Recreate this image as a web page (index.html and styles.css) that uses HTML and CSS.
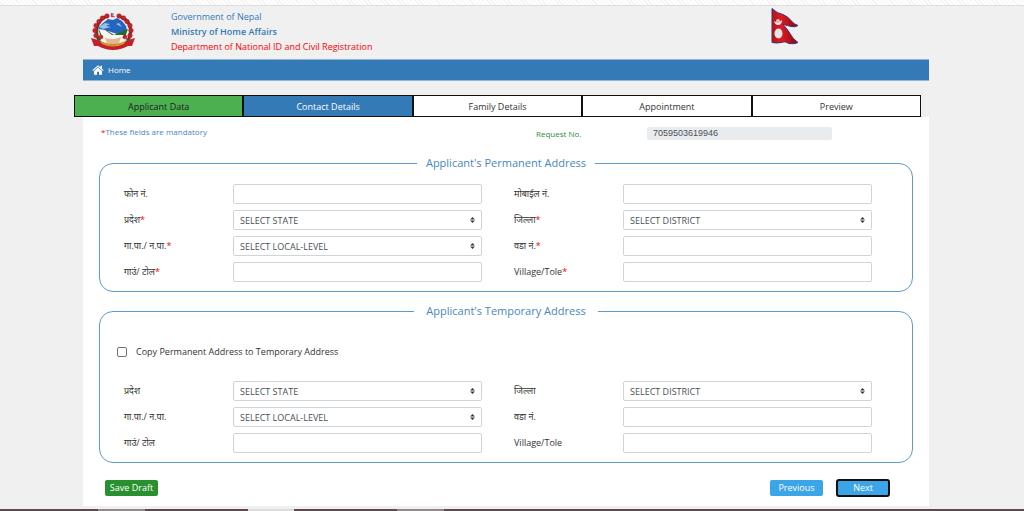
FILE: index.html
```html
<!DOCTYPE html>
<html lang="en">
<head>
<meta charset="utf-8">
<title>Contact Details</title>
<link rel="stylesheet" href="styles.css">
</head>
<body>
<div class="top-strip"></div>
<div class="page">
  <header class="masthead">
    <svg class="emblem" viewBox="0 0 44 38" role="img" aria-label="Emblem of Nepal">
      <circle cx="22" cy="18" r="16" fill="#f3f1ee"/>
      <path d="M17 4Q4 8 6 24q1 3 3 5M27 4q15 4 12 20-1 3-3 5" fill="none" stroke="#31572b" stroke-width="3"/>
      <path d="M8 15l4-4 5-4 5 1 4-2 5 3 4 5 1 4-10 4-9-3-9 0z" fill="#2566bd"/>
      <path d="M8 15l6-4 5 1-4 2 5 1-8 2zM24 8l4 3-3 1 6 3-3-4z" fill="#9fc0e6"/>
      <path d="M8 18l7 0 8 5 9-4 5-2-3 8-8 3-8-3-9-2z" fill="#236b2c"/>
      <path d="M8 17l6 1 7 5 12 0-3 5-10 1-9-5z" fill="#f7f7f5"/>
      <path d="M14 26l6 1 4 0 6-2-2 6-5 2-7-2z" fill="#e6b78f"/>
      <path d="M8 28q6 4 14 4t14-4l-3 6q-11 4-22 0z" fill="#c48a22"/>
      <path d="M0 26l7 2q15 10 30 0l7-2-3 8-4 0q-15 8-30 0l-4 0z" fill="#c4202c"/>
      <path d="M9 29q13 7 26 0l-2 3q-11 5-22 0z" fill="#cf9a2c"/>
      <g fill="#d01c2a" stroke="#8f1620" stroke-width=".4">
        <circle cx="16" cy="4" r="2.300"/><circle cx="11.500" cy="6" r="2.300"/><circle cx="8" cy="9.500" r="2.300"/><circle cx="5" cy="13.500" r="2.300"/><circle cx="4" cy="18.500" r="2.300"/><circle cx="5" cy="23.500" r="2.300"/><circle cx="10" cy="25" r="2"/>
        <circle cx="28" cy="4" r="2.300"/><circle cx="32.500" cy="6" r="2.300"/><circle cx="36" cy="9.500" r="2.300"/><circle cx="39" cy="13.500" r="2.300"/><circle cx="40" cy="18.500" r="2.300"/><circle cx="39" cy="23.500" r="2.300"/><circle cx="34" cy="25" r="2"/>
      </g>
      <path d="M20 1l3 1-2 1 3 2h-4z" fill="#c82b5a" stroke="#8b7bb5" stroke-width=".5"/>
    </svg>
    <div class="titles">
      <span>Government of Nepal</span>
      <strong>Ministry of Home Affairs</strong>
      <span class="department">Department of National ID and Civil Registration</span>
    </div>
    <svg class="flag" viewBox="0 0 28 37" role="img" aria-label="Flag of Nepal">
      <defs>
        <linearGradient id="cloth" x1="0" x2="1" y1="0" y2="0">
          <stop offset="0" stop-color="#b3131c"/><stop offset=".35" stop-color="#dc1b22"/><stop offset=".7" stop-color="#b40f18"/><stop offset="1" stop-color="#6f0a25"/>
        </linearGradient>
      </defs>
      <path d="M1 .5q5 5 11 6 5 2 8 6 3 4 7 5-3 2-7 1-3-1-8-2 4 4 7 9 3 6 8 9-4 2-9 1-4-3-8-1-4 1-9 0z" fill="url(#cloth)" stroke="#41306f" stroke-width="1"/>
      <path d="M3 13q4 3 8-1 0 5-4 5-3 0-4-4z" fill="#ececec"/>
      <circle cx="7" cy="13" r="2" fill="#e3b9b9"/>
      <ellipse cx="7.500" cy="25.500" rx="4" ry="5" fill="#e6e6e6"/>
    </svg>
  </header>

  <nav class="navbar">
    <a class="home" href="#">
      <svg class="home-icon" viewBox="0 0 12 10" aria-hidden="true">
        <path d="M6 .2L.3 5.2l.7.8L6 1.7 11 6l.7-.8L10 3.7V.8H8.400v1.500z" fill="#fff"/>
        <path d="M6 2.500L2 6v3.800h3V6.700h2v3.100h3V6z" fill="#fff"/>
      </svg>
      Home
    </a>
  </nav>

  <div class="tabs">
    <button class="tab done" type="button">Applicant Data</button>
    <button class="tab current" type="button">Contact Details</button>
    <button class="tab" type="button">Family Details</button>
    <button class="tab" type="button">Appointment</button>
    <button class="tab" type="button">Preview</button>
  </div>

  <form class="panel">
    <div class="request">
      <p class="note"><span class="req">*</span>These fields are mandatory</p>
      <label class="request-label" for="request-no">Request No.</label>
      <input class="request-no" id="request-no" type="text" value="7059503619946" readonly>
    </div>

    <fieldset class="group">
      <legend>Applicant's Permanent Address</legend>
      <div class="fields">
        <div class="field"><label for="p-phone">फोन नं.</label><input id="p-phone" type="text"></div>
        <div class="field"><label for="p-mobile">मोबाईल नं.</label><input id="p-mobile" type="text"></div>
        <div class="field"><label for="p-state">प्रदेश<span class="req">*</span></label><select id="p-state"><option>SELECT STATE</option></select></div>
        <div class="field"><label for="p-district">जिल्ला<span class="req">*</span></label><select id="p-district"><option>SELECT DISTRICT</option></select></div>
        <div class="field"><label for="p-local">गा.पा./ न.पा.<span class="req">*</span></label><select id="p-local"><option>SELECT LOCAL-LEVEL</option></select></div>
        <div class="field"><label for="p-ward">वडा नं.<span class="req">*</span></label><input id="p-ward" type="text"></div>
        <div class="field"><label for="p-tole">गाउं/ टोल<span class="req">*</span></label><input id="p-tole" type="text"></div>
        <div class="field"><label for="p-village">Village/Tole<span class="req">*</span></label><input id="p-village" type="text"></div>
      </div>
    </fieldset>

    <fieldset class="group temporary">
      <legend>Applicant's Temporary Address</legend>
      <div class="copy">
        <input id="copy" type="checkbox">
        <label for="copy">Copy Permanent Address to Temporary Address</label>
      </div>
      <div class="fields">
        <div class="field"><label for="t-state">प्रदेश</label><select id="t-state"><option>SELECT STATE</option></select></div>
        <div class="field"><label for="t-district">जिल्ला</label><select id="t-district"><option>SELECT DISTRICT</option></select></div>
        <div class="field"><label for="t-local">गा.पा./ न.पा.</label><select id="t-local"><option>SELECT LOCAL-LEVEL</option></select></div>
        <div class="field"><label for="t-ward">वडा नं.</label><input id="t-ward" type="text"></div>
        <div class="field"><label for="t-tole">गाउं/ टोल</label><input id="t-tole" type="text"></div>
        <div class="field"><label for="t-village">Village/Tole</label><input id="t-village" type="text"></div>
      </div>
    </fieldset>

    <div class="actions">
      <button class="btn save" type="button">Save Draft</button>
      <button class="btn" type="button">Previous</button>
      <button class="btn next" type="button">Next</button>
    </div>
  </form>
</div>
<div class="bottom-strip"></div>
</body>
</html>
```
FILE: styles.css
```css
* {
  box-sizing: border-box;
}

body {
  margin: 0;
  background: #f0f0f0;
  color: #333;
  font: 9px/14px "Open Sans", "Noto Sans", "Noto Sans Devanagari", sans-serif;
}

button,
input,
select {
  margin: 0;
  font: inherit;
  color: inherit;
}

.top-strip {
  height: 6px;
  border-bottom: 1px solid #dedede;
  background: repeating-linear-gradient(45deg, #fff 0 2px, #f3f3f3 2px 3px);
}

.page {
  padding: 0 95px 0 83px;
}

.masthead {
  display: flex;
  align-items: flex-start;
  height: 53px;
  padding: 2px 130px 0 8px;
}

.emblem {
  width: 44px;
  height: 38px;
  margin-top: 4px;
}

.titles {
  display: flex;
  flex-direction: column;
  gap: 1px;
  margin: 2px auto 0 36px;
  color: #337ab7;
}

.titles strong {
  font-weight: 600;
}

.titles .department {
  color: #f00;
}

.flag {
  width: 28px;
  height: 37px;
}

.navbar {
  display: flex;
  height: 22px;
  padding-left: 9px;
  border: solid #8fb4d6;
  border-width: 1px 0;
  background: #337ab7;
}

.home {
  display: flex;
  align-items: center;
  gap: 4px;
  color: #fff;
  font-size: 8px;
  text-decoration: none;
}

.home-icon {
  width: 12px;
  height: 10px;
}

.tabs {
  display: grid;
  grid-template-columns: repeat(5, 1fr);
  margin: 14px 8px 0 -9px;
}

.tab {
  height: 22px;
  padding: 2px 0 0;
  border: 1px solid #111;
  background: #fff;
}

.tab.done {
  background: #4caf50;
  color: #222;
}

.tab.current {
  background: #337ab7;
  color: #fff;
}

.panel {
  padding: 10px 16px 9px;
  background: #fff;
}

.request {
  display: flex;
  align-items: flex-start;
  height: 29px;
  padding-right: 81px;
  font-size: 8px;
}

.note {
  margin: -2px auto 0 2px;
  color: #4a86c8;
}

.request-label {
  width: 111px;
  color: #2e8b3a;
}

.request-no {
  width: 185px;
  height: 13px;
  padding: 0 6px;
  border: 0;
  border-radius: 2px;
  background: #e9ecef;
  color: #495057;
  font: 9px/13px "Liberation Sans", sans-serif;
}

.req {
  color: #f00;
}

.group {
  min-width: 0;
  margin: 0 0 12px;
  padding: 14px 24px 9px;
  border: 1px solid #5b9bd0;
  border-radius: 14px;
}

.group legend {
  height: 14px;
  margin: 0 auto;
  padding: 0 9px;
  color: #4a86bf;
  font-size: 11px;
}

.fields {
  display: grid;
  grid-template-columns: 1fr 1fr;
  gap: 6px 32px;
  margin-right: 16px;
}

.field {
  display: grid;
  grid-template-columns: 109px 1fr;
}

.field label {
  line-height: 20px;
}

.field input,
.field select {
  width: 100%;
  height: 20px;
  padding: 0 6px;
  border: 1px solid #ced4da;
  border-radius: 2px;
  background: #fff;
  color: #495057;
}

.field select {
  padding-top: 1px;
  appearance: none;
  background: #fff url("data:image/svg+xml,%3Csvg xmlns='http://www.w3.org/2000/svg' viewBox='0 0 4 5'%3E%3Cpath fill='%23343a40' d='M2 0L0 2h4zM2 5L0 3h4z'/%3E%3C/svg%3E") no-repeat right 6px center / 5px 6px;
}

.temporary {
  margin-bottom: 16px;
  padding-top: 27px;
}

.temporary legend {
  padding: 0 12px;
}

.copy {
  display: flex;
  align-items: center;
  gap: 9px;
  margin: 0 0 22px -7px;
}

.copy input {
  appearance: none;
  width: 10px;
  height: 10px;
  border: 1px solid #767676;
  border-radius: 2px;
  background: #fff;
}

.actions {
  display: flex;
  align-items: center;
  gap: 13px;
  height: 18px;
  padding: 0 23px 0 6px;
}

.btn {
  width: 53px;
  height: 16px;
  padding: 0;
  border: 0;
  border-radius: 2px;
  background: #3ba5e8;
  color: #fff;
}

.btn.save {
  margin-right: auto;
  background: #28902f;
}

.btn.next {
  width: 54px;
  height: 18px;
  border: 2px solid #101010;
  border-radius: 3px;
}

.bottom-strip {
  height: 5px;
  border-top: 3px solid #f0f0f0;
  background: linear-gradient(90deg, #5b4b4d 98px, #8f8a88 98px 145px, #5b4b4d 145px 248px, #dcdcdc 248px 294px, #5b4b4d 294px 397px, #8f8a88 397px 444px, #5b4b4d 444px);
}
```
